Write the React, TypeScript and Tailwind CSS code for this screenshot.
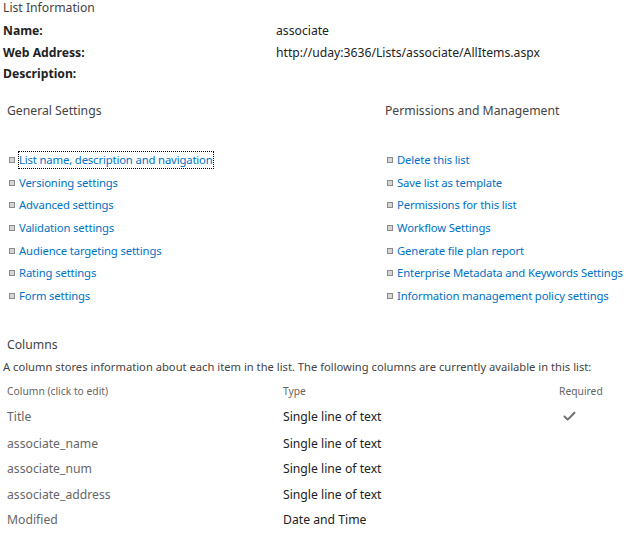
import { Check } from "lucide-react";

const general = [
  "List name, description and navigation",
  "Versioning settings",
  "Advanced settings",
  "Validation settings",
  "Audience targeting settings",
  "Rating settings",
  "Form settings",
];

const permissions = [
  "Delete this list",
  "Save list as template",
  "Permissions for this list",
  "Workflow Settings",
  "Generate file plan report",
  "Enterprise Metadata and Keywords Settings",
  "Information management policy settings",
];

const columns = [
  { name: "Title", type: "Single line of text", required: true },
  { name: "associate_name", type: "Single line of text", required: false },
  { name: "associate_num", type: "Single line of text", required: false },
  { name: "associate_address", type: "Single line of text", required: false },
  { name: "Modified", type: "Date and Time", required: false },
];

function LinkList({ items, focusFirst }: { items: string[]; focusFirst?: boolean }) {
  return (
    <ul className="flex flex-col">
      {items.map((item, i) => (
        <li key={item} className="flex items-center h-[22.7px]">
          <span className="w-[6px] h-[6px] ml-[2px] mr-[4px] border border-[#8a8a8a] bg-[#d6d6d6] shrink-0" />
          <a
            href="#"
            className={
              "text-[#0072c6] text-[11.3px] tracking-[-0.15px] leading-[16px] whitespace-nowrap " +
              (focusFirst && i === 0 ? "outline outline-1 outline-dotted outline-black" : "")
            }
          >
            {item}
          </a>
        </li>
      ))}
    </ul>
  );
}

export default function App() {
  return (
    <div
      className="w-[632px] h-[539px] bg-white text-[12.2px] text-[#444] overflow-hidden"
      style={{ fontFamily: '"Noto Sans", sans-serif' }}
    >
      <div className="px-[3px]">
        <div className="h-[16px] leading-[16px] text-[#444]">List Information</div>
        <div className="grid grid-cols-[273px_1fr] mt-[4px] text-[#222] leading-[21.5px]">
          <div className="font-bold">Name:</div>
          <div>associate</div>
          <div className="font-bold">Web Address:</div>
          <div>http://uday:3636/Lists/associate/AllItems.aspx</div>
          <div className="font-bold">Description:</div>
          <div />
        </div>
      </div>

      <div className="flex mt-[16px] px-[7px]">
        <div className="w-[378px] shrink-0">
          <div className="leading-[20px]">General Settings</div>
          <div className="mt-[28px]">
            <LinkList items={general} focusFirst />
          </div>
        </div>
        <div className="min-w-0">
          <div className="leading-[20px]">Permissions and Management</div>
          <div className="mt-[28px]">
            <LinkList items={permissions} />
          </div>
        </div>
      </div>

      <div className="mt-[28px]">
        <div className="px-[7px] leading-[20px]">Columns</div>
        <div className="px-[3px] mt-[4px] text-[11.2px] leading-[16px] whitespace-nowrap">
          A column stores information about each item in the list. The following columns are currently available in this list:
        </div>
        <div className="grid grid-cols-[276px_276px_1fr] px-[7px] mt-[8px] text-[#666]">
          <div className="text-[10.3px] leading-[16px]">Column (click to edit)</div>
          <div className="text-[10.3px] leading-[16px]">Type</div>
          <div className="text-[10.3px] leading-[16px]">Required</div>
          {columns.map((c, i) => (
            <div key={c.name} className="contents">
              <div className={"flex items-center " + (i === 0 ? "h-[32px] pt-[3px]" : "h-[25.5px]")}>{c.name}</div>
              <div className={"flex items-center text-[#222] " + (i === 0 ? "h-[32px] pt-[3px]" : "h-[25.5px]")}>{c.type}</div>
              <div className={"flex items-center " + (i === 0 ? "h-[32px] pt-[3px]" : "h-[25.5px]")}>
                {c.required && <Check className="w-[15px] h-[15px] ml-[3px] text-[#707070]" strokeWidth={3.2} />}
              </div>
            </div>
          ))}
        </div>
      </div>
    </div>
  );
}
